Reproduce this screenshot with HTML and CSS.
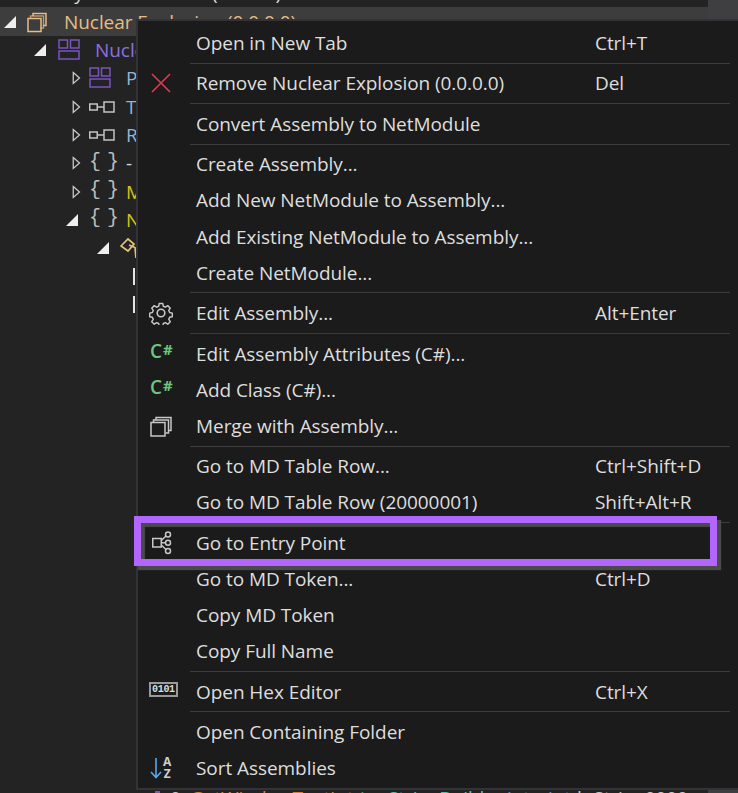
FILE: index.html
```html
<!DOCTYPE html>
<html lang="en">
<head>
<meta charset="utf-8">
<title>Assembly context menu</title>
<link rel="stylesheet" href="styles.css">
</head>
<body>
<div class="app">
  <div class="scrollbar"></div>
  <div class="tree">
    <div class="node lvl0"><span class="arrow"></span><svg class="ticon" viewBox="0 0 22 22"><rect x="4" y="4" width="12" height="13" fill="none" stroke="#cfcfcf" stroke-width="1.4"/></svg><span class="tlabel muted">System.Runtime (0.0.0.0)</span></div>
    <div class="node lvl0 selected"><svg class="arrow" viewBox="0 0 12 12"><path d="M0 12 12 0V12Z" fill="#eee"/></svg><svg class="ticon" viewBox="0 0 22 22"><g fill="none" stroke="#e6bd85" stroke-width="1.5"><path d="M6 5V2.500h13v12h-3"/><path d="M3.500 7.500V5h13v12h-3" stroke-opacity=".7"/><rect x="1" y="7.500" width="13" height="13"/></g></svg><span class="tlabel asm">Nuclear Explosion (0.0.0.0)</span></div>
    <div class="node lvl1"><svg class="arrow" viewBox="0 0 12 12"><path d="M0 12 12 0V12Z" fill="#eee"/></svg><svg class="ticon" viewBox="0 0 22 22"><g fill="none" stroke="#7a55bd" stroke-width="1.5"><rect x="1" y="1" width="8.500" height="8"/><rect x="12.500" y="1" width="8.500" height="8"/><rect x="1" y="12" width="20" height="8"/></g></svg><span class="tlabel mod">Nuclear Explosion.exe</span></div>
    <div class="node lvl2"><svg class="arrow" viewBox="0 0 12 16"><path d="M1.500 1.500 9 8 1.500 14.500Z" fill="none" stroke="#ccc" stroke-width="1.500"/></svg><svg class="ticon" viewBox="0 0 22 22"><g fill="none" stroke="#7a55bd" stroke-width="1.5"><rect x="1" y="1" width="8.500" height="8"/><rect x="12.500" y="1" width="8.500" height="8"/><rect x="1" y="12" width="20" height="8"/></g></svg><span class="tlabel blue">PE</span></div>
    <div class="node lvl2"><svg class="arrow" viewBox="0 0 12 16"><path d="M1.500 1.500 9 8 1.500 14.500Z" fill="none" stroke="#ccc" stroke-width="1.500"/></svg><svg class="ticon wide" viewBox="0 0 26 22"><g fill="none" stroke="#c4c4c4" stroke-width="1.5"><rect x=".75" y="8" width="7.500" height="6"/><rect x="15" y="6" width="10" height="10"/><path d="M8 11h7"/></g></svg><span class="tlabel blue">Type References</span></div>
    <div class="node lvl2"><svg class="arrow" viewBox="0 0 12 16"><path d="M1.500 1.500 9 8 1.500 14.500Z" fill="none" stroke="#ccc" stroke-width="1.500"/></svg><svg class="ticon wide" viewBox="0 0 26 22"><g fill="none" stroke="#c4c4c4" stroke-width="1.5"><rect x=".75" y="8" width="7.500" height="6"/><rect x="15" y="6" width="10" height="10"/><path d="M8 11h7"/></g></svg><span class="tlabel blue">References</span></div>
    <div class="node lvl2"><svg class="arrow" viewBox="0 0 12 16"><path d="M1.500 1.500 9 8 1.500 14.500Z" fill="none" stroke="#ccc" stroke-width="1.500"/></svg><span class="ticon brace">{ }</span><span class="tlabel muted">-</span></div>
    <div class="node lvl2"><svg class="arrow" viewBox="0 0 12 16"><path d="M1.500 1.500 9 8 1.500 14.500Z" fill="none" stroke="#ccc" stroke-width="1.500"/></svg><span class="ticon brace">{ }</span><span class="tlabel ns">My</span></div>
    <div class="node lvl2"><svg class="arrow open" viewBox="0 0 12 12"><path d="M0 12 12 0V12Z" fill="#eee"/></svg><span class="ticon brace">{ }</span><span class="tlabel ns">Nuclear</span></div>
    <div class="node lvl3"><svg class="arrow" viewBox="0 0 12 12"><path d="M0 12 12 0V12Z" fill="#eee"/></svg><svg class="ticon" viewBox="0 0 22 22"><g fill="none" stroke="#e3c27d" stroke-width="1.700"><path d="M1 9 8 2l6 5-6 7Z"/><path d="M9 8l6 2.500 1 10.500"/></g></svg></div>
    <div class="node lvl4"><span class="bar"></span></div>
    <div class="node lvl4"><span class="bar"></span></div>
  </div>
  <div class="tree-last"><span class="stub"></span><span class="zero">0</span><span class="orange">GetWindowTextInternal</span><span class="green">in</span><span class="teal">StringBuilder</span><span class="kw kw-a">int</span><span class="kw kw-b">int</span><span class="dim">lpString0000</span></div>

  <div class="menu">
    <div class="item"><span class="mi"></span><span class="ml">Open in New Tab</span><span class="ms">Ctrl+T</span></div>
    <div class="sep"></div>
    <div class="item"><span class="mi"><svg viewBox="0 0 22 22" class="ico"><path d="M2 2 20 20M20 2 2 20" stroke="#d63c4e" stroke-width="1.700" fill="none"/></svg></span><span class="ml">Remove Nuclear Explosion (0.0.0.0)</span><span class="ms">Del</span></div>
    <div class="sep"></div>
    <div class="item"><span class="mi"></span><span class="ml">Convert Assembly to NetModule</span></div>
    <div class="sep"></div>
    <div class="item"><span class="mi"></span><span class="ml">Create Assembly...</span></div>
    <div class="item"><span class="mi"></span><span class="ml">Add New NetModule to Assembly...</span></div>
    <div class="item"><span class="mi"></span><span class="ml">Add Existing NetModule to Assembly...</span></div>
    <div class="item"><span class="mi"></span><span class="ml">Create NetModule...</span></div>
    <div class="sep"></div>
    <div class="item"><span class="mi"><svg viewBox="0 0 24 24" class="ico gear"><g fill="none" stroke="#c8c8c8" stroke-width="1.600" stroke-linejoin="round"><path d="M10 1.500h4l.6 3 2.300 1 2.600-1.700 2.800 2.800-1.700 2.600 1 2.300 3 .6v4l-3 .6-1 2.300 1.700 2.600-2.800 2.800-2.600-1.700-2.300 1-.6 3h-4l-.6-3-2.300-1-2.600 1.700-2.800-2.800 1.700-2.600-1-2.300-3-.6v-4l3-.6 1-2.300-1.700-2.600 2.800-2.800 2.600 1.700 2.300-1Z" transform="translate(1.200 1.200) scale(.9)"/><circle cx="12" cy="12" r="3.800"/></g></svg></span><span class="ml">Edit Assembly...</span><span class="ms">Alt+Enter</span></div>
    <div class="sep"></div>
    <div class="item"><span class="mi"><span class="cs">C<span class="hash">#</span></span></span><span class="ml">Edit Assembly Attributes (C#)...</span></div>
    <div class="item"><span class="mi"><span class="cs">C<span class="hash">#</span></span></span><span class="ml">Add Class (C#)...</span></div>
    <div class="item"><span class="mi"><svg viewBox="0 0 22 22" class="ico"><g fill="none" stroke="#c8c8c8" stroke-width="1.500"><path d="M6 5V2.500h15v13h-3"/><path d="M3.500 7.500V5h15v13h-3"/><rect x="1" y="7.500" width="14" height="13.500"/></g></svg></span><span class="ml">Merge with Assembly...</span></div>
    <div class="sep"></div>
    <div class="item"><span class="mi"></span><span class="ml">Go to MD Table Row...</span><span class="ms">Ctrl+Shift+D</span></div>
    <div class="item"><span class="mi"></span><span class="ml">Go to MD Table Row (20000001)</span><span class="ms">Shift+Alt+R</span></div>
    <div class="sep"></div>
    <div class="item callout"><span class="mi"><svg viewBox="0 0 20 24" class="ico entry"><g fill="none" stroke="#c8c8c8" stroke-width="1.500"><rect x=".75" y="7.500" width="8.500" height="8.500"/><path d="M9.250 9.500 14 5M9.250 11.750H13M9.250 14 14 18.500"/><circle cx="16" cy="3.500" r="2.500"/><circle cx="16" cy="11.750" r="2.500"/><circle cx="16" cy="20" r="2.500"/></g></svg></span><span class="ml">Go to Entry Point</span></div>
    <div class="item"><span class="mi"></span><span class="ml">Go to MD Token...</span><span class="ms">Ctrl+D</span></div>
    <div class="item"><span class="mi"></span><span class="ml">Copy MD Token</span></div>
    <div class="item"><span class="mi"></span><span class="ml">Copy Full Name</span></div>
    <div class="sep"></div>
    <div class="item"><span class="mi"><span class="hex">0101</span></span><span class="ml">Open Hex Editor</span><span class="ms">Ctrl+X</span></div>
    <div class="sep"></div>
    <div class="item"><span class="mi"></span><span class="ml">Open Containing Folder</span></div>
    <div class="item"><span class="mi"><svg viewBox="0 0 12 22" class="sortarrow"><path d="M6 1V20M1 15l5 5.500L11 15" fill="none" stroke="#5aa7e8" stroke-width="1.600"/></svg><span class="az">A<br>Z</span></span><span class="ml">Sort Assemblies</span></div>
  </div>
</div>
</body>
</html>
```
FILE: styles.css
```css
* { box-sizing: border-box; }
html, body { margin: 0; height: 100%; }
body { background: #232323; overflow: hidden; font-family: "Open Sans", "Noto Sans", sans-serif; }
.app { position: relative; width: 738px; height: 793px; overflow: hidden; display: flex; flex-direction: column; font-size: 19px; letter-spacing: -0.06px; }
.scrollbar { position: absolute; top: 0; right: 0; bottom: 0; width: 30px; background: #3f3f42; }

.tree { margin-top: -21px; position: relative; }
.node { height: 28.35px; display: flex; align-items: center; white-space: nowrap; }
.selected { background: #3d3d3d; margin-right: 30px; }
.lvl0 { padding-left: 4px; }
.lvl1 { padding-left: 34px; }
.lvl2 { padding-left: 72px; }
.lvl3 { padding-left: 97px; }
.lvl4 { padding-left: 133px; }
.arrow { width: 12px; height: 12px; flex: none; }
.lvl2 .arrow { width: 10px; height: 16px; margin-right: 7px; }
.lvl2 .arrow.open { width: 12px; height: 12px; margin-left: -6px; margin-right: 11px; }
.ticon { width: 22px; height: 22px; flex: none; margin-left: 11px; }
.lvl1 .ticon { margin-left: 12px; }
.lvl2 .ticon { margin-left: 0; }
.ticon.wide { width: 26px; margin-right: -4px; }
.brace { color: #bdbdbd; font-family: "Liberation Mono", monospace; font-size: 20px; line-height: 22px; text-align: center; letter-spacing: -3px; margin-top: -3px; }
.tlabel { margin-left: 15px; }
.muted { color: #d8d8d8; }
.asm { color: #e6bd85; }
.mod { color: #8d6fe0; }
.blue { color: #8fb4d8; }
.ns { color: #d8c318; }
.bar { width: 2px; height: 17px; background: #e4e4e4; }

.tree-last { position: absolute; left: 155px; top: 785px; width: 560px; height: 30px; display: flex; font-size: 19px; white-space: nowrap; }
.stub { width: 5px; height: 14px; margin-top: 6px; background: #7a55bd; flex: none; margin-right: 10px; }
.zero { width: 20px; color: #c8c8c8; flex: none; }
.orange { color: #d9822b; width: 170px; flex: none; overflow: hidden; }
.green { color: #3fae5a; width: 28px; flex: none; }
.teal { color: #4ec9b0; width: 119px; flex: none; overflow: hidden; }
.kw { color: #569cd6; flex: none; }
.kw-a { width: 41px; }
.kw-b { width: 29px; }
.dim { color: #c8c8c8; flex: none; }

.menu { position: absolute; left: 136px; top: 19px; right: -2px; height: 771px; background: #1b1b1b; border: 2px solid #333337; padding-top: 4px; color: #dedede; display: flex; flex-direction: column; }
.item { height: 36.2px; flex: none; display: flex; align-items: center; position: relative; }
.mi { width: 58px; flex: none; display: flex; align-items: center; padding-left: 12px; }
.ml { width: 399px; flex: none; white-space: nowrap; }
.ms { white-space: nowrap; }
.sep { height: 1px; flex: none; margin: 1.6px 8px 1.6px 52px; background: #3c3c3c; }
.ico { width: 22px; height: 22px; display: block; }
.gear { width: 24px; height: 24px; margin-left: -1px; }
.entry { width: 20px; height: 24px; margin-left: 2px; }
.cs { color: #6cc77e; font-weight: 600; font-size: 19px; line-height: 1; margin-top: -5px; display: flex; align-items: flex-start; }
.hash { font-size: 15px; font-weight: 700; line-height: 1; margin-left: 1px; }
.hex { font-family: "Liberation Mono", monospace; font-weight: 700; font-size: 10px; line-height: 11px; letter-spacing: -0.3px; color: #dcdcdc; border: 2px solid #9a9a9a; padding: 0 1px; margin-left: -1px; margin-top: -4px; }
.sortarrow { width: 12px; height: 24px; flex: none; }
.az { font-weight: 700; font-size: 12px; line-height: 12px; color: #d0d0d0; margin-left: 1px; text-align: center; }

.callout::after { content: ""; box-sizing: border-box; position: absolute; left: -4px; top: -9px; width: 583px; height: 50px; border: 7px solid #b266ff; box-shadow: 4px 4px 1px #4a4a4a, inset 4px 4px 1px #4a4a4a; pointer-events: none; }
```
